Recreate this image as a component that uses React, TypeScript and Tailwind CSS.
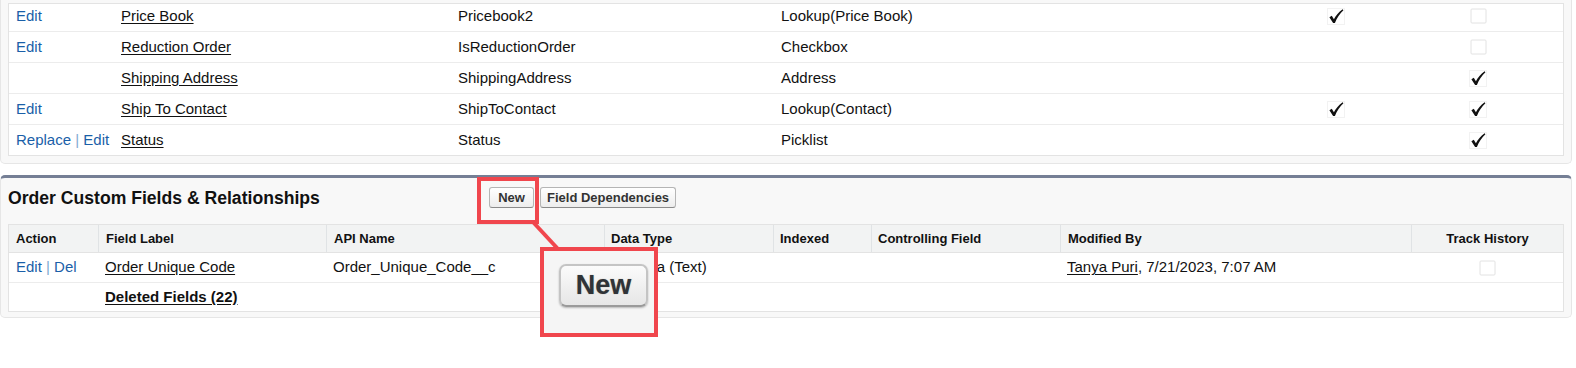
import React from "react";

const Check = () => (
  <svg width="18" height="17" viewBox="0 0 18 17">
    <rect x="0.5" y="0.5" width="17" height="16" fill="none" stroke="#e4e4e4" strokeDasharray="1 1" />
    <path d="M2.4 9.2 L4.8 7.8 L6.9 11.2 C8.9 7.4 11.6 4 15.6 1.2 L16.4 2.3 C12.7 5.7 10 9.7 7.9 15 L6.1 15 Z" fill="#111" />
  </svg>
);

const Empty = () => (
  <svg width="17" height="16" viewBox="0 0 17 16">
    <rect x="1" y="1" width="15" height="14" rx="1" fill="#fff" stroke="#e2e2e2" />
  </svg>
);

type TopRow = { action: string[]; label: string; api: string; type: string; c1?: "check" | "empty"; c2?: "check" | "empty" };

const topRows: TopRow[] = [
  { action: ["Edit"], label: "Price Book", api: "Pricebook2", type: "Lookup(Price Book)", c1: "check", c2: "empty" },
  { action: ["Edit"], label: "Reduction Order", api: "IsReductionOrder", type: "Checkbox", c2: "empty" },
  { action: [], label: "Shipping Address", api: "ShippingAddress", type: "Address", c2: "check" },
  { action: ["Edit"], label: "Ship To Contact", api: "ShipToContact", type: "Lookup(Contact)", c1: "check", c2: "check" },
  { action: ["Replace", "Edit"], label: "Status", api: "Status", type: "Picklist", c2: "check" },
];

const Actions = ({ items }: { items: string[] }) => (
  <span>
    {items.map((a, i) => (
      <React.Fragment key={a}>
        {i > 0 && <span className="text-[#7fa9d1]"> | </span>}
        <span className="text-[#1a5fa8]">{a}</span>
      </React.Fragment>
    ))}
  </span>
);

const Mark = ({ v }: { v?: "check" | "empty" }) =>
  v === "check" ? <Check /> : v === "empty" ? <Empty /> : null;

const Btn = ({ children, className = "" }: { children: React.ReactNode; className?: string }) => (
  <button
    className={`h-[21px] rounded-[3px] border border-[#b5b5b5] border-b-[#8a8a8a] bg-gradient-to-b from-white to-[#ededed] text-[13px] font-bold text-[#333] leading-none ${className}`}
  >
    {children}
  </button>
);

export default function App() {
  return (
    <div className="relative w-[1576px] h-[368px] overflow-hidden bg-white font-['Liberation_Sans',Arial,sans-serif] text-[15px] text-[#111]">
      {/* standard fields panel (continues above the crop) */}
      <div className="w-[1572px] h-[164px] bg-[#f8f8f8] border-x border-b border-[#e6e6e6] rounded-b-[5px] px-[7px]">
        <div className="h-[3px]" />
        <div className="bg-white border border-[#e3e3e3]">
          {topRows.map((r, i) => (
            <div
              key={r.label}
              className={`flex items-center ${i === 0 ? "h-[27px] pb-[3px]" : "h-[31px] border-t border-[#ececec]"}`}
            >
              <div className="w-[105px] pl-[7px]">
                <Actions items={r.action} />
              </div>
              <div className="w-[337px] pl-[7px]">
                <span className="underline underline-offset-2">{r.label}</span>
              </div>
              <div className="w-[323px] pl-[7px]">{r.api}</div>
              <div className="w-[497px] pl-[7px]">{r.type}</div>
              <div className="w-[130px] flex justify-center">
                <Mark v={r.c1} />
              </div>
              <div className="w-[154px] flex justify-center">
                <Mark v={r.c2} />
              </div>
              <div className="flex-1" />
            </div>
          ))}
        </div>
      </div>

      <div className="h-[11px]" />

      {/* custom fields panel */}
      <div className="w-[1572px] h-[143px] bg-[#f8f8f8] border-t-[3px] border-t-[#757f95] border-x border-b border-x-[#e6e6e6] border-b-[#e6e6e6] rounded-[5px] px-[7px]">
        <div className="flex items-center h-[46px] pb-[4px]">
          <h2 className="w-[481px] text-[17.6px] font-bold leading-none">Order Custom Fields &amp; Relationships</h2>
          <div className="flex items-center gap-[6px] -mt-[4px]">
            <Btn className="w-[45px]">New</Btn>
            <Btn className="px-[6px]">Field Dependencies</Btn>
          </div>
        </div>
        <div className="bg-white border border-[#e3e3e3]">
          <div className="flex h-[28px] bg-[#f2f3f3] border-b border-[#e3e3e3] text-[13px] font-bold">
            <div className="w-[89px] pl-[7px] flex items-center">Action</div>
            <div className="w-[228px] pl-[7px] flex items-center border-l border-[#e0e3e5]">Field Label</div>
            <div className="w-[278px] pl-[7px] flex items-center border-l border-[#e0e3e5]">API Name</div>
            <div className="w-[169px] pl-[6px] flex items-center border-l border-[#e0e3e5]">Data Type</div>
            <div className="w-[98px] pl-[6px] flex items-center border-l border-[#e0e3e5]">Indexed</div>
            <div className="w-[189px] pl-[6px] flex items-center border-l border-[#e0e3e5]">Controlling Field</div>
            <div className="w-[351px] pl-[7px] flex items-center border-l border-[#e0e3e5]">Modified By</div>
            <div className="flex-1 flex items-center justify-center border-l border-[#e0e3e5]">Track History</div>
          </div>
          <div className="flex items-center h-[30px] border-b border-[#ececec]">
            <div className="w-[89px] pl-[7px]">
              <Actions items={["Edit", "Del"]} />
            </div>
            <div className="w-[228px] pl-[7px]">
              <span className="underline underline-offset-2">Order Unique Code</span>
            </div>
            <div className="w-[278px] pl-[7px]">Order_Unique_Code__c</div>
            <div className="w-[169px] pl-[6px]">Formula (Text)</div>
            <div className="w-[98px]" />
            <div className="w-[189px]" />
            <div className="w-[351px] pl-[7px]">
              <span className="underline underline-offset-2">Tanya Puri</span>, 7/21/2023, 7:07 AM
            </div>
            <div className="flex-1 flex justify-center">
              <Empty />
            </div>
          </div>
          <div className="flex items-center h-[28px]">
            <div className="w-[89px]" />
            <div className="pl-[7px] font-bold">
              <span className="underline underline-offset-2">Deleted Fields (22)</span>
            </div>
          </div>
        </div>
      </div>

      {/* callout */}
      <div className="absolute left-[477px] top-[177px] w-[62px] h-[47px] border-[4px] border-[#f0464d]" />
      <svg className="absolute left-[528px] top-[218px]" width="36" height="34" viewBox="0 0 36 34">
        <line x1="5" y1="4" x2="30" y2="31" stroke="#f0464d" strokeWidth="4" />
      </svg>
      <div className="absolute left-[540px] top-[247px] w-[118px] h-[90px] border-[4px] border-[#f0464d] bg-[#f5f5f5] pt-[13px] pl-[15px]">
        <div className="w-[89px] h-[43px] rounded-[7px] border-[2px] border-[#c4c4c4] border-b-[#9a9a9a] bg-gradient-to-b from-[#fbfbfb] to-[#e6e6e6] shadow-[0_1px_2px_rgba(0,0,0,0.25)] flex items-center justify-center">
          <span className="text-[27px] font-bold text-[#2f3338] leading-none [text-shadow:0_0_1px_rgba(80,60,20,0.5)]">New</span>
        </div>
      </div>
    </div>
  );
}
